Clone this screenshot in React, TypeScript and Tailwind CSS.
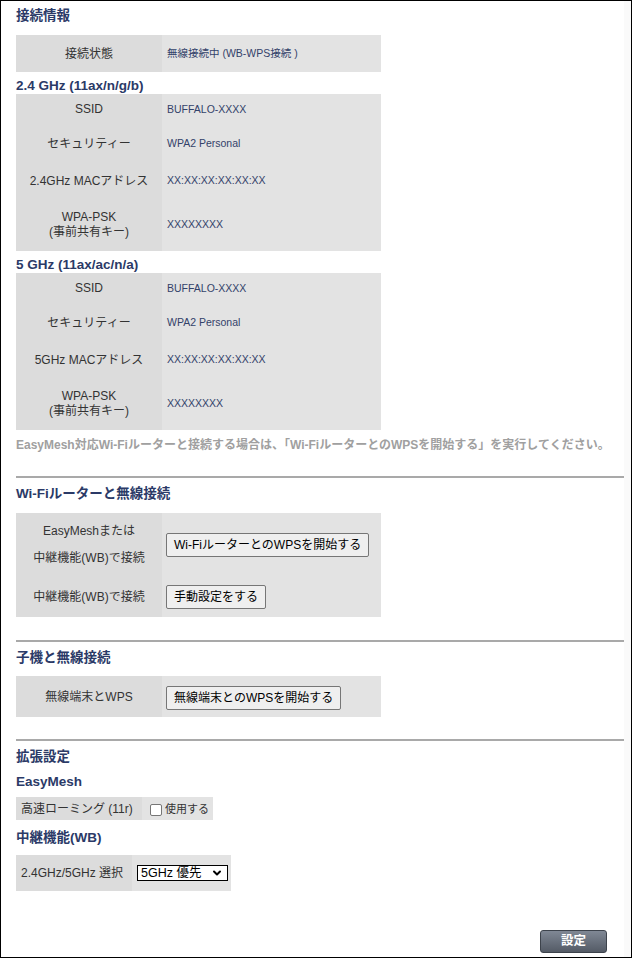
import { ChevronDown } from "lucide-react";

const font = "font-['Liberation_Sans','Noto_Sans_CJK_JP',sans-serif]";

type Row = { label: string[]; value: string; h: string };

const band24: Row[] = [
  { label: ["SSID"], value: "BUFFALO-XXXX", h: "h-[31px]" },
  { label: ["セキュリティー"], value: "WPA2 Personal", h: "h-[38px]" },
  { label: ["2.4GHz MACアドレス"], value: "XX:XX:XX:XX:XX:XX", h: "h-[36px]" },
  { label: ["WPA-PSK", "(事前共有キー)"], value: "XXXXXXXX", h: "h-[52px]" },
];

const band5: Row[] = [
  { label: ["SSID"], value: "BUFFALO-XXXX", h: "h-[31px]" },
  { label: ["セキュリティー"], value: "WPA2 Personal", h: "h-[38px]" },
  { label: ["5GHz MACアドレス"], value: "XX:XX:XX:XX:XX:XX", h: "h-[36px]" },
  { label: ["WPA-PSK", "(事前共有キー)"], value: "XXXXXXXX", h: "h-[52px]" },
];

function Heading({ children, className = "" }: { children: React.ReactNode; className?: string }) {
  return <h2 className={`text-[13.5px] font-bold leading-4 text-[#2b3a67] ${className}`}>{children}</h2>;
}

function InfoTable({ rows }: { rows: Row[] }) {
  return (
    <div className="w-[365px]">
      {rows.map((r) => (
        <div key={r.label.join()} className={`grid grid-cols-[146px_219px] ${r.h}`}>
          <div className="flex flex-col items-center justify-center bg-[#dcdcdc] text-center text-[12px] leading-[15px] text-[#333]">
            {r.label.map((l) => (
              <span key={l}>{l}</span>
            ))}
          </div>
          <div className="flex items-center bg-[#e3e3e3] pl-[5px] text-[10.5px] text-[#33426a]">{r.value}</div>
        </div>
      ))}
    </div>
  );
}

function Btn({ children }: { children: React.ReactNode }) {
  return (
    <button className="rounded-[2px] border border-[#767676] bg-[#efefef] px-[7px] py-[3px] text-[12px] leading-4 text-black">
      {children}
    </button>
  );
}

function Divider({ className = "" }: { className?: string }) {
  return <div className={`h-[2px] bg-[#a9a9a9] ${className}`} />;
}

export default function App() {
  return (
    <div className={`flex h-[958px] w-[632px] border border-black bg-white ${font}`}>
      <div className="flex flex-1 flex-col pl-[15px] pt-[7px]">
        <Heading>接続情報</Heading>
        <div className="mt-[11px] grid h-[37px] w-[365px] grid-cols-[146px_219px]">
          <div className="flex items-center justify-center bg-[#dcdcdc] text-[12px] text-[#333]">接続状態</div>
          <div className="flex items-center bg-[#e3e3e3] pl-[5px] text-[10.5px] text-[#33426a]">無線接続中 (WB-WPS接続 )</div>
        </div>

        <Heading className="mt-[6px]">2.4 GHz (11ax/n/g/b)</Heading>
        <InfoTable rows={band24} />

        <Heading className="mt-[6px]">5 GHz (11ax/ac/n/a)</Heading>
        <InfoTable rows={band5} />

        <p className="mt-[7px] text-[12px] font-bold leading-4 text-[#a0a0a0]">
          EasyMesh対応Wi-Fiルーターと接続する場合は、「Wi-FiルーターとのWPSを開始する」を実行してください。
        </p>

        <Divider className="mt-[23px]" />
        <Heading className="mt-[8px]">Wi-Fiルーターと無線接続</Heading>
        <div className="mt-[11px] w-[365px]">
          <div className="grid h-[64px] grid-cols-[146px_219px]">
            <div className="flex flex-col items-center justify-center bg-[#dcdcdc] text-[12px] leading-[27px] text-[#333]">
              <span>EasyMeshまたは</span>
              <span>中継機能(WB)で接続</span>
            </div>
            <div className="flex items-center bg-[#e3e3e3] pl-[4px]">
              <Btn>Wi-FiルーターとのWPSを開始する</Btn>
            </div>
          </div>
          <div className="grid h-[40px] grid-cols-[146px_219px]">
            <div className="flex items-center justify-center bg-[#dcdcdc] text-[12px] text-[#333]">中継機能(WB)で接続</div>
            <div className="flex items-center bg-[#e3e3e3] pl-[4px]">
              <Btn>手動設定をする</Btn>
            </div>
          </div>
        </div>

        <Divider className="mt-[23px]" />
        <Heading className="mt-[8px]">子機と無線接続</Heading>
        <div className="mt-[10px] grid h-[41px] w-[365px] grid-cols-[146px_219px]">
          <div className="flex items-center justify-center bg-[#dcdcdc] text-[12px] text-[#333]">無線端末とWPS</div>
          <div className="flex items-center bg-[#e3e3e3] pl-[4px] pt-[3px]">
            <Btn>無線端末とのWPSを開始する</Btn>
          </div>
        </div>

        <Divider className="mt-[22px]" />
        <Heading className="mt-[8px]">拡張設定</Heading>
        <Heading className="mt-[9px]">EasyMesh</Heading>
        <div className="mt-[7px] flex h-[23px] w-fit">
          <div className="flex w-[126px] items-center bg-[#dcdcdc] pl-[5px] text-[12px] text-[#333]">高速ローミング (11r)</div>
          <div className="flex w-[71px] items-center gap-[3px] bg-[#e3e3e3] pl-[8px] pt-[2px]">
            <span className="h-[12px] w-[12px] rounded-[2px] border border-[#767676] bg-white" />
            <span className="text-[11px] text-[#333]">使用する</span>
          </div>
        </div>

        <Heading className="mt-[10px]">中継機能(WB)</Heading>
        <div className="mt-[9px] flex h-[36px] w-fit">
          <div className="flex w-[116px] items-center bg-[#dcdcdc] pl-[5px] text-[12px] text-[#333]">2.4GHz/5GHz 選択</div>
          <div className="flex w-[99px] items-center bg-[#e3e3e3] pl-[5px]">
            <div className="flex h-[16px] w-[91px] items-center justify-between border border-black bg-white pl-[3px] pr-[4px] text-[12.5px] leading-none text-black">
              <span>5GHz 優先</span>
              <ChevronDown size={12} strokeWidth={4} />
            </div>
          </div>
        </div>

        <div className="mt-auto mb-[4px] flex justify-end pr-[17px]">
          <button className="h-[23px] w-[67px] rounded-[3px] border border-[#3d434c] bg-gradient-to-b from-[#808895] to-[#545b66] text-[12.5px] font-bold text-white">
            設定
          </button>
        </div>
      </div>
      <div className="w-[7px] bg-[#fafafa]" />
    </div>
  );
}
